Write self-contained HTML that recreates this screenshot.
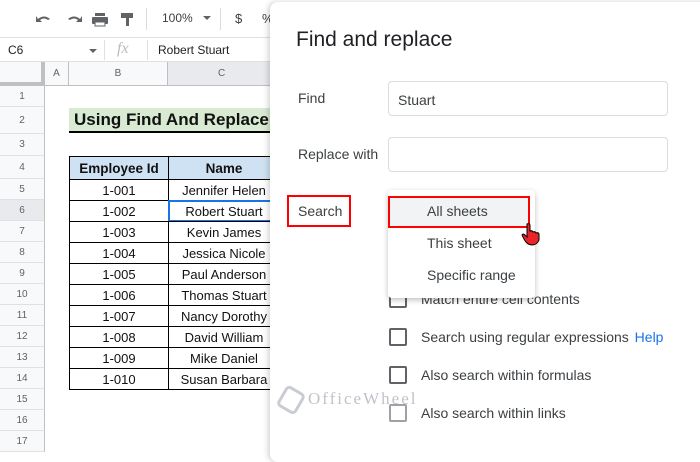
<!DOCTYPE html>
<html><head><style>
*{margin:0;padding:0;box-sizing:border-box}
body{width:700px;height:446px;overflow:hidden;background:#fff;font-family:"Liberation Sans",Arial,sans-serif;position:relative}
.a{position:absolute}
.rh{position:absolute;left:0;width:45px;border-bottom:1px solid #e0e0e0;border-right:1px solid #c0c0c0;background:#f8f9fa;color:#5f6368;font-size:10px;text-align:center;display:flex;align-items:center;justify-content:center}
.cell{position:absolute;border:1px solid #000;font-size:13px;display:flex;align-items:center;justify-content:center;color:#111;white-space:nowrap;overflow:hidden}
.lbl{position:absolute;font-size:14px;color:#3c4043}
.inp{position:absolute;left:388px;width:280px;height:35px;border:1px solid #dadce0;border-radius:4px;font-size:14px;color:#3c4043;padding:10px 9px}
.cb{position:absolute;left:389px;width:18px;height:18px;border:2px solid #5f6368;border-radius:2px}
.ct{position:absolute;left:421px;font-size:14px;color:#3c4043}
</style></head><body>
<div class="a" style="left:0;top:0;width:700px;height:38px;background:#fff;border-bottom:1px solid #e0e0e0"></div>
<svg class="a" style="left:34px;top:10px" width="110" height="18" viewBox="0 0 110 18" fill="#5f6368">
<path d="M4 9 Q10 4 16 9 L14 10 Q10 7 6 10 L8 12 L2 12 L2 6 Z"/>
<path d="M46 9 Q40 4 34 9 L36 10 Q40 7 44 10 L42 12 L48 12 L48 6 Z"/>
<rect x="58" y="7" width="16" height="7" rx="1"/><rect x="61" y="3" width="10" height="3"/><rect x="61" y="12" width="10" height="4" fill="#fff" stroke="#5f6368"/>
<rect x="87" y="3" width="12" height="5"/><rect x="92" y="8" width="3" height="8"/>
</svg>
<div class="a" style="left:146px;top:8px;width:1px;height:22px;background:#dadce0"></div>
<div class="a" style="left:162px;top:11px;font-size:12px;color:#3c4043">100%</div>
<div class="a" style="left:203px;top:16px;border:4px solid transparent;border-top:4px solid #5f6368"></div>
<div class="a" style="left:220px;top:8px;width:1px;height:22px;background:#dadce0"></div>
<div class="a" style="left:235px;top:11px;font-size:13px;color:#3c4043">$</div>
<div class="a" style="left:262px;top:11px;font-size:13px;color:#3c4043">%</div>
<div class="a" style="left:0;top:38px;width:700px;height:24px;border-bottom:1px solid #e0e0e0"></div>
<div class="a" style="left:8px;top:43px;font-size:12px;color:#222">C6</div>
<div class="a" style="left:89px;top:49px;border:4px solid transparent;border-top:4px solid #5f6368"></div>
<div class="a" style="left:104px;top:40px;width:1px;height:20px;background:#e0e0e0"></div>
<div class="a" style="left:117px;top:40px;font-size:16px;color:#bbb;font-style:italic;font-family:'Liberation Serif',serif">fx</div>
<div class="a" style="left:147px;top:40px;width:1px;height:20px;background:#e0e0e0"></div>
<div class="a" style="left:158px;top:43px;font-size:12px;color:#222">Robert Stuart</div>
<div class="a" style="left:0;top:62px;width:45px;height:24px;background:#f8f9fa;border-right:4px solid #c0c0c0;border-bottom:4px solid #c0c0c0"></div>
<div class="a" style="left:45px;top:62px;width:24px;height:24px;background:#f8f9fa;border-right:1px solid #c0c0c0;border-bottom:1px solid #c0c0c0;font-size:10px;color:#5f6368;text-align:center;line-height:24px">A</div>
<div class="a" style="left:69px;top:62px;width:99px;height:24px;background:#f8f9fa;border-right:1px solid #c0c0c0;border-bottom:1px solid #c0c0c0;font-size:10px;color:#5f6368;text-align:center;line-height:24px">B</div>
<div class="a" style="left:168px;top:62px;width:110px;height:24px;background:#e8eaed;border-bottom:1px solid #c0c0c0;font-size:10px;color:#5f6368;padding-left:50px;line-height:24px">C</div>
<div class="rh" style="top:86px;height:21px">1</div>
<div class="rh" style="top:107px;height:27px">2</div>
<div class="rh" style="top:134px;height:22px">3</div>
<div class="rh" style="top:156px;height:23px">4</div>
<div class="rh" style="top:179px;height:21px">5</div>
<div class="rh" style="top:200px;height:21px;background:#e8eaed">6</div>
<div class="rh" style="top:221px;height:21px">7</div>
<div class="rh" style="top:242px;height:21px">8</div>
<div class="rh" style="top:263px;height:21px">9</div>
<div class="rh" style="top:284px;height:21px">10</div>
<div class="rh" style="top:305px;height:21px">11</div>
<div class="rh" style="top:326px;height:21px">12</div>
<div class="rh" style="top:347px;height:21px">13</div>
<div class="rh" style="top:368px;height:21px">14</div>
<div class="rh" style="top:389px;height:21px">15</div>
<div class="rh" style="top:410px;height:21px">16</div>
<div class="rh" style="top:431px;height:21px">17</div>
<div class="a" style="left:69px;top:108px;width:210px;height:25px;background:#d9ead3;border-bottom:2px solid #000;font-size:17px;font-weight:bold;padding:2px 0 0 5px;white-space:nowrap;color:#111;overflow:hidden">Using Find And Replace</div>
<div class="cell" style="left:69px;top:156px;width:100px;height:24px;background:#cfe2f3;font-weight:bold;font-size:13.5px">Employee Id</div>
<div class="cell" style="left:168px;top:156px;width:112px;height:24px;background:#cfe2f3;font-weight:bold;font-size:13.5px">Name</div>
<div class="cell" style="left:69px;top:179px;width:100px;height:22px">1-001</div><div class="cell" style="left:168px;top:179px;width:112px;height:22px">Jennifer Helen</div>
<div class="cell" style="left:69px;top:200px;width:100px;height:22px">1-002</div><div class="cell" style="left:168px;top:200px;width:112px;height:22px;border:2px solid #1a73e8">Robert Stuart</div>
<div class="cell" style="left:69px;top:221px;width:100px;height:22px">1-003</div><div class="cell" style="left:168px;top:221px;width:112px;height:22px">Kevin James</div>
<div class="cell" style="left:69px;top:242px;width:100px;height:22px">1-004</div><div class="cell" style="left:168px;top:242px;width:112px;height:22px">Jessica Nicole</div>
<div class="cell" style="left:69px;top:263px;width:100px;height:22px">1-005</div><div class="cell" style="left:168px;top:263px;width:112px;height:22px">Paul Anderson</div>
<div class="cell" style="left:69px;top:284px;width:100px;height:22px">1-006</div><div class="cell" style="left:168px;top:284px;width:112px;height:22px">Thomas Stuart</div>
<div class="cell" style="left:69px;top:305px;width:100px;height:22px">1-007</div><div class="cell" style="left:168px;top:305px;width:112px;height:22px">Nancy Dorothy</div>
<div class="cell" style="left:69px;top:326px;width:100px;height:22px">1-008</div><div class="cell" style="left:168px;top:326px;width:112px;height:22px">David William</div>
<div class="cell" style="left:69px;top:347px;width:100px;height:22px">1-009</div><div class="cell" style="left:168px;top:347px;width:112px;height:22px">Mike Daniel</div>
<div class="cell" style="left:69px;top:368px;width:100px;height:22px">1-010</div><div class="cell" style="left:168px;top:368px;width:112px;height:22px">Susan Barbara</div>
<div class="a" style="left:270px;top:2px;width:440px;height:460px;background:#fff;border-radius:8px;box-shadow:-2px 0 6px rgba(0,0,0,0.18)"></div>
<div class="a" style="left:296px;top:28px;font-size:21px;color:#202124">Find and replace</div>
<div class="lbl" style="left:298px;top:90px">Find</div>
<div class="inp" style="top:81px">Stuart</div>
<div class="lbl" style="left:298px;top:146px">Replace with</div>
<div class="inp" style="top:137px"></div>
<div class="lbl" style="left:298px;top:203px">Search</div>
<div class="a" style="left:287px;top:195px;width:64px;height:32px;border:2px solid #f00"></div>
<div class="cb" style="top:290px"></div><div class="ct" style="top:291px">Match entire cell contents</div>
<div class="cb" style="top:328px"></div><div class="ct" style="top:329px">Search using regular expressions <span style="color:#1a73e8;margin-left:2px">Help</span></div>
<div class="cb" style="top:366px"></div><div class="ct" style="top:367px">Also search within formulas</div>
<div class="cb" style="top:404px;opacity:.6"></div><div class="ct" style="top:405px">Also search within links</div>
<div class="a" style="left:280px;top:388px;font-size:17px;color:#b8bcc4;letter-spacing:2px;font-family:'Liberation Serif',serif;opacity:.9"><span style="display:inline-block;width:22px;height:24px;border:3px solid #c4c8cf;border-radius:5px;transform:rotate(30deg);vertical-align:middle;margin-right:6px"></span>OfficeWheel</div>
<div class="a" style="left:388px;top:190px;width:147px;height:108px;background:#fff;border-radius:4px;box-shadow:0 2px 6px rgba(0,0,0,0.25)"></div>
<div class="a" style="left:388px;top:196px;width:142px;height:32px;background:#f1f3f4;border:2px solid #f00"></div>
<div class="a" style="left:427px;top:203px;font-size:14px;color:#3c4043">All sheets</div>
<div class="a" style="left:427px;top:235px;font-size:14px;color:#3c4043">This sheet</div>
<div class="a" style="left:427px;top:267px;font-size:14px;color:#3c4043">Specific range</div>
<svg class="a" style="left:520px;top:222px" width="22" height="24" viewBox="0 0 22 24"><path d="M7 2 Q9 1 10 3 L10 9 Q12 8 13 10 Q15 9 16 11 Q18 10 19 12 L19 18 Q17 23 12 23 Q7 23 4 17 L2 13 Q3 11 5 13 L7 15 Z" fill="#e8262a" stroke="#000" stroke-width="1"/></svg>
</body></html>
